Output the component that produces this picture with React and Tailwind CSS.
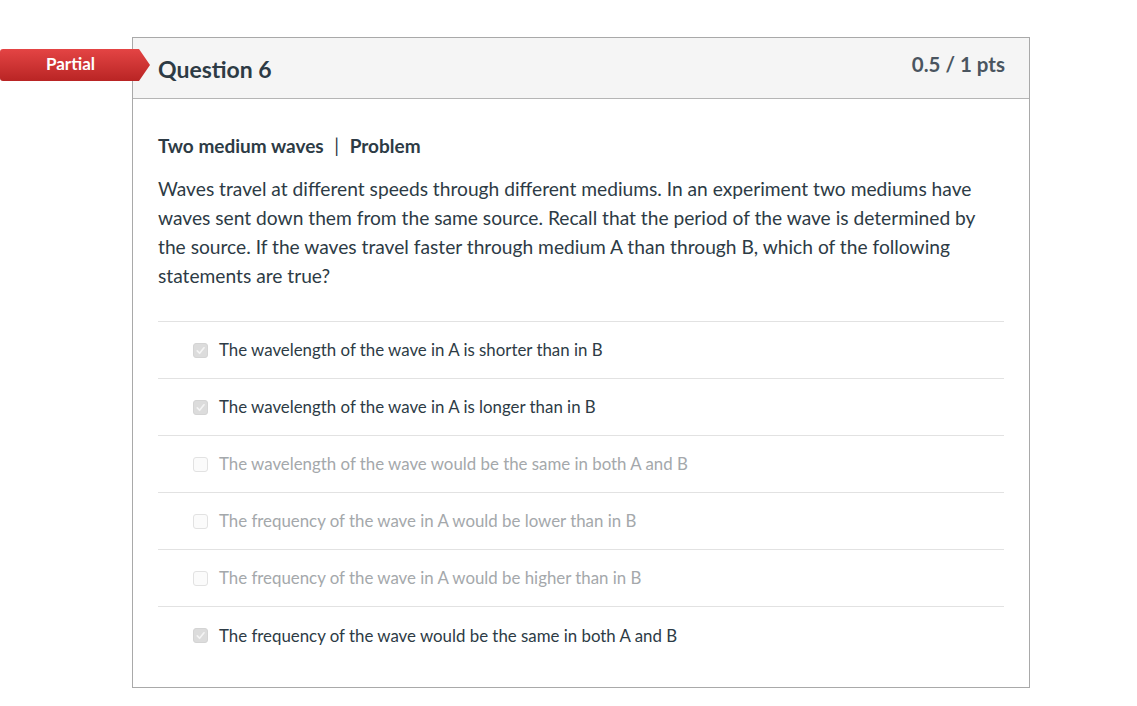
import React from "react";

const answers = [
  { text: "The wavelength of the wave in A is shorter than in B", checked: true },
  { text: "The wavelength of the wave in A is longer than in B", checked: true },
  { text: "The wavelength of the wave would be the same in both A and B", checked: false },
  { text: "The frequency of the wave in A would be lower than in B", checked: false },
  { text: "The frequency of the wave in A would be higher than in B", checked: false },
  { text: "The frequency of the wave would be the same in both A and B", checked: true },
];

function Box({ checked }) {
  return checked ? (
    <span className="flex h-[15px] w-[15px] items-center justify-center rounded-[3px] border border-[#d4d4d4] bg-[#dcdcdc]">
      <svg width="11" height="11" viewBox="0 0 12 12" fill="none">
        <path d="M2.5 6.5 L5 9 L9.8 3" stroke="#f4f4f4" strokeWidth="1.8" strokeLinecap="round" strokeLinejoin="round" />
      </svg>
    </span>
  ) : (
    <span className="block h-[15px] w-[15px] rounded-[3px] border border-[#e2e2e2] bg-[#fbfbfb]" />
  );
}

export default function App() {
  return (
    <div className="relative min-h-[706px] bg-white pt-[37px] pl-[132px] font-['Lato','Open_Sans',sans-serif]">
      <div className="absolute left-0 top-[49px] flex h-[32px] w-[150px] items-center bg-gradient-to-b from-[#e44444] to-[#b92424] [clip-path:polygon(0_0,139px_0,100%_50%,139px_100%,0_100%)] rounded-l-[3px]">
        <span className="w-[141px] text-center text-[17px] font-bold leading-none text-white -mt-[3px]">Partial</span>
      </div>
      <div className="w-[898px] border border-[#a9a9a9]">
        <div className="flex h-[61px] items-start justify-between border-b border-[#b5b5b5] bg-[#f5f5f5] pl-[25px] pr-[24px]">
          <h2 className="mt-[17px] text-[23px] font-bold leading-[28px] text-[#2d3b45]">Question 6</h2>
          <div className="mt-[13px] text-[20.5px] font-bold leading-[26px] text-[#4a5560]">0.5 / 1 pts</div>
        </div>
        <div className="px-[25px] pt-[34px] pb-[23px] text-[#2d3b45]">
          <p className="text-[19px] font-bold leading-[26px]">
            Two medium waves <span className="mx-[6px] font-normal">|</span> Problem
          </p>
          <p className="mt-[15px] text-[19.2px] leading-[29px]">
            Waves travel at different speeds through different mediums. In an experiment two mediums have waves sent down them from the same source. Recall that the period of the wave is determined by the source. If the waves travel faster through medium A than through B, which of the following statements are true?
          </p>
          <div className="mt-[31px] border-t border-[#e2e2e2]">
            {answers.map((a, i) => (
              <div
                key={i}
                className={`flex h-[57px] items-center gap-[11px] pl-[35px] ${i < answers.length - 1 ? "border-b border-[#e2e2e2]" : ""}`}
              >
                <Box checked={a.checked} />
                <span className={`text-[16.85px] leading-[20px] ${a.checked ? "text-[#2d3b45]" : "text-[#a4a8ab]"}`}>{a.text}</span>
              </div>
            ))}
          </div>
        </div>
      </div>
    </div>
  );
}
